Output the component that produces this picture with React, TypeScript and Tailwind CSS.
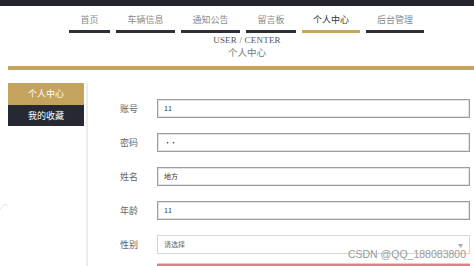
import * as React from 'react';

type NavItem = { label: string; w: string; active?: boolean };

const navItems: NavItem[] = [
    { label: '首页', w: 'w-[41px]' },
    { label: '车辆信息', w: 'w-[59px]' },
    { label: '通知公告', w: 'w-[59px]' },
    { label: '留言板', w: 'w-[50px]' },
    { label: '个人中心', w: 'w-[58px]', active: true },
    { label: '后台管理', w: 'w-[58px]' }
];

type Field = { label: string; value: string; select?: boolean };

const fields: Field[] = [
    { label: '账号', value: '11' },
    { label: '密码', value: '••' },
    { label: '姓名', value: '地方' },
    { label: '年龄', value: '11' },
    { label: '性别', value: '请选择', select: true }
];

export default function App() {
    return (
        <div className="relative w-[474px] h-[266px] overflow-hidden bg-white font-['Noto_Sans_CJK_SC',sans-serif]">
            <div className="h-[6px] bg-[#24262f]" />

            {/* nav */}
            <div className="flex gap-[6px] pl-[69px] pt-[8px]">
                {navItems.map((item) => (
                    <div key={item.label} className={`${item.w} flex flex-col items-center`}>
                        <span className={`h-[12px] text-[9px] leading-[12px] ${item.active ? 'text-[#333]' : 'text-[#8a8a8a]'}`}>{item.label}</span>
                        <div className={`mt-[4px] h-[3px] w-full ${item.active ? 'bg-[#c4a862]' : 'bg-[#2f3035]'}`} />
                    </div>
                ))}
            </div>

            <div className="flex flex-col items-center pl-[20px]">
                <span className="mt-[2px] text-[9px] leading-[10px] text-[#555] font-['Liberation_Serif',serif] tracking-[0.2px]">USER / CENTER</span>
                <span className="mt-[1px] text-[9.5px] leading-[12px] text-[#777]">个人中心</span>
            </div>

            <div className="ml-[8px] mt-[8px] h-[4px] bg-[#c4a560]" />

            <div className="flex pl-[8px] mt-[13px]">
                {/* sidebar */}
                <div className="w-[80px] h-[200px] border-r-2 border-[#ececec] pr-[2px]">
                    <div className="h-[22px] bg-[#c4a35e] text-white text-[9px] flex items-center justify-center">个人中心</div>
                    <div className="h-[21px] bg-[#262833] text-white text-[9px] flex items-center justify-center">我的收藏</div>
                </div>

                {/* form */}
                <div className="flex flex-col pt-[16px] pl-[32px] gap-[15px]">
                    {fields.map((f) => (
                        <div key={f.label} className="flex items-center">
                            <span className="w-[37px] text-[9px] text-[#666]">{f.label}</span>
                            <div
                                className={`w-[313px] h-[19px] flex items-center justify-between px-[6px] text-[7px] ${
                                    f.select
                                        ? 'border border-[#d6d6d6] text-[#666]'
                                        : 'border border-[#9d9d9d] shadow-[inset_0_0_0_1px_#e2e2e2] text-[#333]'
                                }`}
                            >
                                <span className={f.value === '••' ? 'tracking-[-1px]' : ''}>{f.value}</span>
                                {f.select && <span className="text-[5px] text-[#aaa]">▼</span>}
                            </div>
                        </div>
                    ))}
                    <div className="-mt-[6px] ml-[37px] w-[313px] h-[6px] border-t border-[#f3c6c6] bg-[#e07d7d]" />
                </div>
            </div>

            {/* faint background decoration on the left */}
            <svg className="absolute left-0 top-[180px]" width="8" height="50" viewBox="0 0 8 50">
                <path d="M0 30 Q4 22 8 26" stroke="#ebe6d2" strokeWidth="1" fill="none" />
            </svg>

            <span className="absolute right-[8px] top-[248px] text-[10.5px] leading-[12px] text-[#9a9a9a] font-['Liberation_Sans',sans-serif]">
                CSDN @QQ_188083800
            </span>
        </div>
    );
}
